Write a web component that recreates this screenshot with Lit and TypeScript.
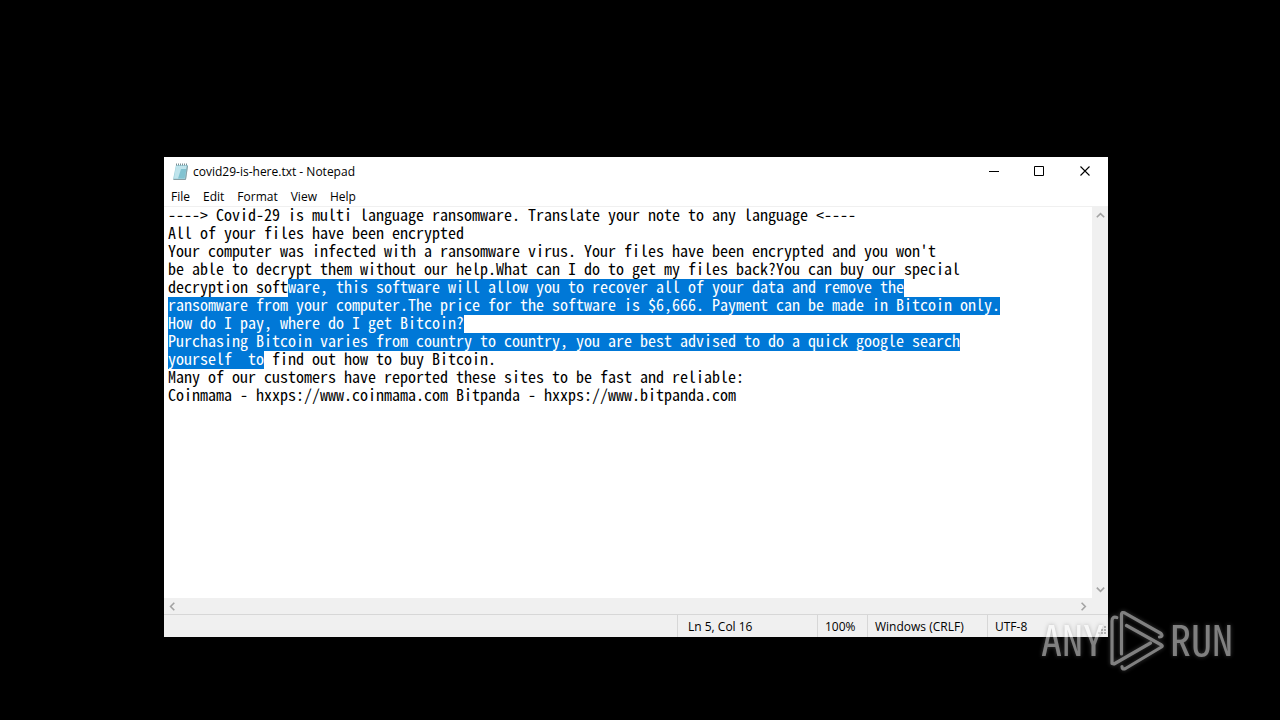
import { LitElement, html, css } from "lit";
import { customElement, query } from "lit/decorators.js";

const NOTE = [
  "----> Covid-29 is multi language ransomware. Translate your note to any language <----",
  "All of your files have been encrypted",
  "Your computer was infected with a ransomware virus. Your files have been encrypted and you won't",
  "be able to decrypt them without our help.What can I do to get my files back?You can buy our special",
  "decryption software, this software will allow you to recover all of your data and remove the",
  "ransomware from your computer.The price for the software is $6,666. Payment can be made in Bitcoin only.",
  "How do I pay, where do I get Bitcoin?",
  "Purchasing Bitcoin varies from country to country, you are best advised to do a quick google search",
  "yourself  to find out how to buy Bitcoin.",
  "Many of our customers have reported these sites to be fast and reliable:",
  "Coinmama - hxxps://www.coinmama.com Bitpanda - hxxps://www.bitpanda.com",
].join("\n");

const SELECTION_START = NOTE.indexOf("ware, this software");
const SELECTION_END = NOTE.indexOf(" find out how");

// One entry per line: the column where its selected part begins and how many characters it holds.
function selectedRuns(text: string, start: number, end: number) {
  let offset = 0;
  return text.split("\n").map((line) => {
    const from = Math.min(Math.max(start - offset, 0), line.length);
    const to = Math.min(Math.max(end - offset, 0), line.length);
    offset += line.length + 1;
    return { from, length: to - from };
  });
}

const chevron = (points: string) => html`
  <svg width="9" height="9" viewBox="0 0 9 9" aria-hidden="true">
    <polyline points=${points} fill="none" stroke="#a3a3a3" stroke-width="1.6" />
  </svg>
`;

@customElement("notepad-editor")
export class NotepadEditor extends LitElement {
  @query("textarea") area!: HTMLTextAreaElement;

  static styles = css`
    :host {
      display: grid;
      grid-template-columns: minmax(0, 1fr) 16px;
      grid-template-rows: minmax(0, 1fr) 16px;
      background: #f0f0f0;
      border-top: 1px solid #f0f0f0;
    }
    .page {
      position: relative;
      background: #fff;
      font-family: "Noto Sans Mono CJK SC", "Liberation Mono", monospace;
      font-size: 16px;
      line-height: 18px;
    }
    .highlight {
      position: absolute;
      inset: 0 4px;
      overflow: hidden;
    }
    .run {
      height: 18px;
      background: #0078d7;
    }
    textarea {
      position: relative;
      display: block;
      box-sizing: border-box;
      width: 100%;
      height: 100%;
      margin: -2px 0 0;
      padding: 0 4px;
      border: 0;
      outline: 0;
      resize: none;
      overflow: hidden;
      background: transparent;
      color: #000;
      caret-color: transparent;
      white-space: pre;
      font: inherit;
    }
    textarea::selection {
      background: transparent;
      color: #fff;
    }
    .bar {
      display: flex;
      align-items: center;
      justify-content: space-between;
    }
    .vertical {
      flex-direction: column;
      padding: 4px 0;
    }
    .horizontal {
      padding: 0 4px;
    }
    button {
      display: flex;
      padding: 0;
      border: 0;
      background: none;
    }
  `;

  firstUpdated() {
    this.area.focus({ preventScroll: true });
    this.area.setSelectionRange(SELECTION_START, SELECTION_END);
  }

  render() {
    return html`
      <div class="page">
        <div class="highlight" aria-hidden="true">
          ${selectedRuns(NOTE, SELECTION_START, SELECTION_END).map(
            (run) => html`<div class="run" style="margin-left:${run.from}ch;width:${run.length}ch"></div>`
          )}
        </div>
        <textarea aria-label="Note text" spellcheck="false" wrap="off" .value=${NOTE}></textarea>
      </div>
      <div class="bar vertical">
        <button aria-label="Scroll up">${chevron("0.8,6.3 4.5,2.6 8.2,6.3")}</button>
        <button aria-label="Scroll down">${chevron("0.8,2.6 4.5,6.3 8.2,2.6")}</button>
      </div>
      <div class="bar horizontal">
        <button aria-label="Scroll left">${chevron("6.3,0.8 2.6,4.5 6.3,8.2")}</button>
        <button aria-label="Scroll right">${chevron("2.6,0.8 6.3,4.5 2.6,8.2")}</button>
      </div>
    `;
  }
}

@customElement("run-watermark")
export class RunWatermark extends LitElement {
  static styles = css`
    :host {
      display: flex;
      align-items: flex-start;
      gap: 6px;
      color: #fff;
      opacity: 0.5;
      pointer-events: none;
      filter: drop-shadow(0 0 2px #777);
      font-family: "Noto Sans Mono CJK SC", "Roboto Condensed", sans-serif;
      font-size: 42px;
      line-height: 56px;
    }
    svg {
      display: block;
    }
  `;

  render() {
    return html`
      <span>ANY</span>
      <svg width="54" height="62" viewBox="0 0 54 62" fill="none" stroke="currentColor" stroke-width="3.2" stroke-linecap="round" stroke-linejoin="round" aria-hidden="true">
        <path d="M6.800 7.500 C3.500 6.500 2 8 2 11 V53.500 L4 54 L40.500 33" />
        <path d="M11.500 44 V4 Q12 1.800 14.500 2.800 L51 23.500 Q53.500 26.500 49.500 27" />
        <path d="M16.500 15.500 L51.500 35 Q53 36 51.500 37 L15.500 58.500 Q12 60 12 56.500" />
      </svg>
      <span>RUN</span>
    `;
  }
}

@customElement("app-root")
export class AppRoot extends LitElement {
  static styles = css`
    :host {
      position: relative;
      display: flex;
      box-sizing: border-box;
      min-height: 100vh;
      padding: 157px 172px 83px 164px;
      background: #000;
      color: #000;
      font-family: "Open Sans", "Noto Sans", sans-serif;
      font-size: 12px;
      line-height: 16px;
    }
    .window {
      flex: 1;
      min-width: 0;
      display: flex;
      flex-direction: column;
      background: #fff;
    }
    .title {
      display: flex;
      align-items: center;
      height: 30px;
      padding-left: 8px;
      gap: 4px;
    }
    h1 {
      flex: 1;
      margin: 0;
      font-size: 12px;
      font-weight: 400;
    }
    .controls {
      display: flex;
      height: 28px;
      align-self: flex-start;
    }
    button {
      margin: 0;
      padding: 0;
      border: 0;
      background: none;
      color: inherit;
      font: inherit;
    }
    .controls button {
      display: grid;
      place-items: center;
      width: 46px;
    }
    .menu {
      display: flex;
      align-items: center;
      height: 19px;
      padding-left: 7px;
      gap: 13px;
    }
    notepad-editor {
      flex: 1;
    }
    .status {
      display: flex;
      justify-content: flex-end;
      height: 22px;
      padding-right: 1px;
      border-top: 1px solid #d7d7d7;
      background: #f0f0f0;
      line-height: 24px;
    }
    .status span {
      box-sizing: border-box;
      padding-left: 7px;
      border-left: 1px solid #d7d7d7;
    }
    .status .position {
      width: 140px;
      padding-left: 10px;
    }
    .status .zoom {
      width: 50px;
    }
    .status .ending {
      width: 120px;
    }
    .status .encoding {
      width: 110px;
    }
    .grip {
      align-self: flex-end;
      margin-bottom: 2px;
    }
    run-watermark {
      position: absolute;
      right: 47px;
      bottom: 48px;
    }
  `;

  render() {
    return html`
      <main class="window">
        <header class="title">
          <svg width="17" height="18" viewBox="0 0 17 18" aria-hidden="true">
            <path d="M4 2 H16 L14 16.500 H1 Z" fill="#9ccfda" />
            <path d="M4 3 H14.500 L12.500 15.500 H2 Z" fill="#bfe4ec" />
            <path d="M9 6 H14.500 L12.500 15.500 H6 Z" fill="#82c3d1" />
            <path d="M15.500 3 L13.500 16.500 H1.500" fill="none" stroke="#8a9ea3" />
            <path d="M4 1.500 H16" stroke="#7c9095" stroke-width="2" stroke-dasharray="1 1" />
          </svg>
          <h1>covid29-is-here.txt - Notepad</h1>
          <div class="controls">
            <button aria-label="Minimize">
              <svg width="11" height="11" viewBox="0 0 11 11"><path d="M1 5.500 H11" stroke="#000" /></svg>
            </button>
            <button aria-label="Maximize">
              <svg width="11" height="11" viewBox="0 0 11 11"><path d="M0.500 0.500 H9.500 V9.500 H0.500 Z" fill="none" stroke="#000" /></svg>
            </button>
            <button aria-label="Close">
              <svg width="11" height="11" viewBox="0 0 11 11"><path d="M0.500 0.500 L9.500 9.500 M9.500 0.500 L0.500 9.500" stroke="#000" stroke-width="1.100" /></svg>
            </button>
          </div>
        </header>
        <nav class="menu">
          <button>File</button>
          <button>Edit</button>
          <button>Format</button>
          <button>View</button>
          <button>Help</button>
        </nav>
        <notepad-editor></notepad-editor>
        <footer class="status">
          <span class="position">Ln 5, Col 16</span>
          <span class="zoom">100%</span>
          <span class="ending">Windows (CRLF)</span>
          <span class="encoding">UTF-8</span>
          <svg class="grip" width="10" height="9" viewBox="0 0 10 9" fill="#b4b4b4" aria-hidden="true">
            <path d="M7 0h2v2h-2z M4 3h2v2h-2z M7 3h2v2h-2z M1 6h2v2h-2z M4 6h2v2h-2z M7 6h2v2h-2z" />
          </svg>
        </footer>
      </main>
      <run-watermark></run-watermark>
    `;
  }
}
